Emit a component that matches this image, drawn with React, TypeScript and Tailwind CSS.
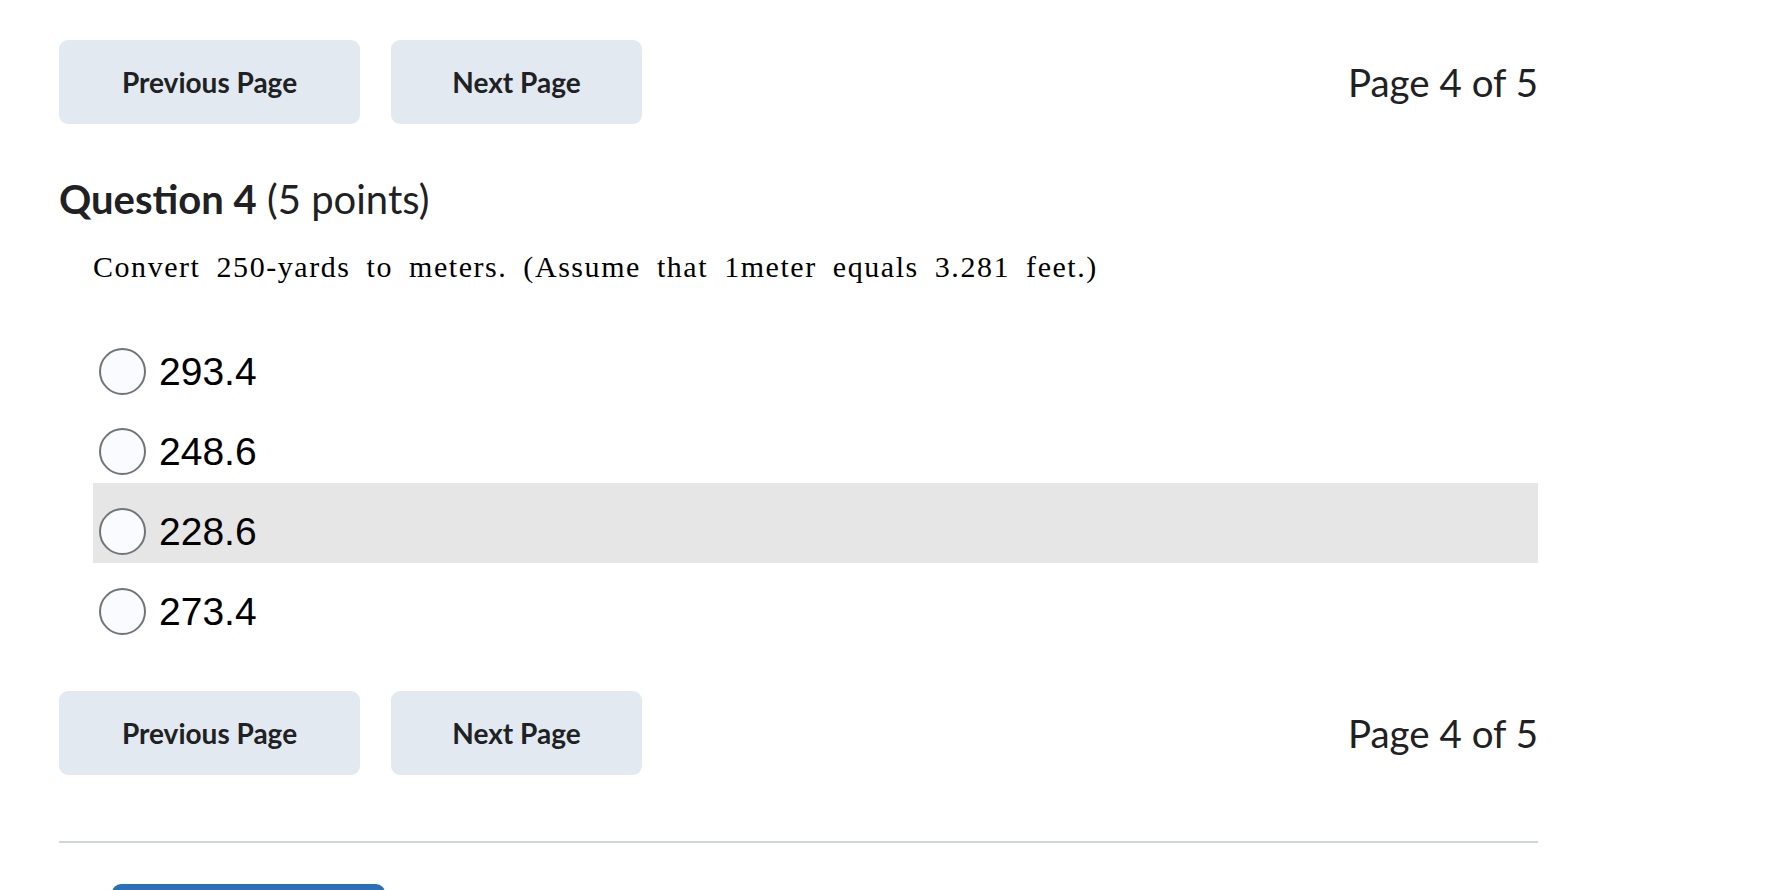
import React from "react";

const lato = { fontFamily: "Lato, 'Noto Sans', sans-serif" } as const;

function NavRow() {
  return (
    <div className="flex h-[84px] items-center" style={lato}>
      <button className="h-[84px] w-[301px] rounded-[9px] bg-[#e3e9f1] text-[28px] font-bold text-[#202122]">
        Previous Page
      </button>
      <button className="ml-[31px] h-[84px] w-[251px] rounded-[9px] bg-[#e3e9f1] text-[28px] font-bold text-[#202122]">
        Next Page
      </button>
      <div className="ml-auto text-[38.5px] leading-none text-[#202122]">Page 4 of 5</div>
    </div>
  );
}

const options = ["293.4", "248.6", "228.6", "273.4"];

export default function App() {
  return (
    <div className="h-[890px] w-[1772px] overflow-hidden bg-white">
      <div className="ml-[59px] w-[1479px] pt-[40px]">
        <NavRow />
        <h2
          className="mt-[51px] text-[40px] leading-[48px] text-[#202122]"
          style={lato}
        >
          <span className="font-bold">Question 4</span> <span>(5 points)</span>
        </h2>
        <p
          className="ml-[34px] mt-[26px] text-[30px] leading-[36px] text-black [word-spacing:7px] tracking-[1.55px]"
          style={{ fontFamily: "'Liberation Serif', 'DejaVu Serif', serif" }}
        >
          Convert 250-yards to meters. (Assume that 1meter equals 3.281 feet.)
        </p>
        <div className="ml-[34px] mt-[38px] flex flex-col">
          {options.map((o, i) => (
            <div
              key={o}
              className={`flex h-[80px] items-start pt-[25px] pl-[6px] ${i === 2 ? "bg-[#e6e6e6]" : ""}`}
            >
              <span className="box-border h-[47px] w-[47px] shrink-0 rounded-full border-2 border-[#707578] bg-[#f9fbff]" />
              <span
                className="ml-[13px] text-[39px] leading-[47px] text-black"
                style={{ fontFamily: "'Liberation Sans', Arial, sans-serif" }}
              >
                {o}
              </span>
            </div>
          ))}
        </div>
        <div className="mt-[48px]">
          <NavRow />
        </div>
        <div className="mt-[66px] h-[2px] bg-[#d0d5da]" />
        <div className="ml-[53px] mt-[41px] h-[50px] w-[273px] rounded-t-[9px] bg-[#2b6fb8]" />
      </div>
    </div>
  );
}
